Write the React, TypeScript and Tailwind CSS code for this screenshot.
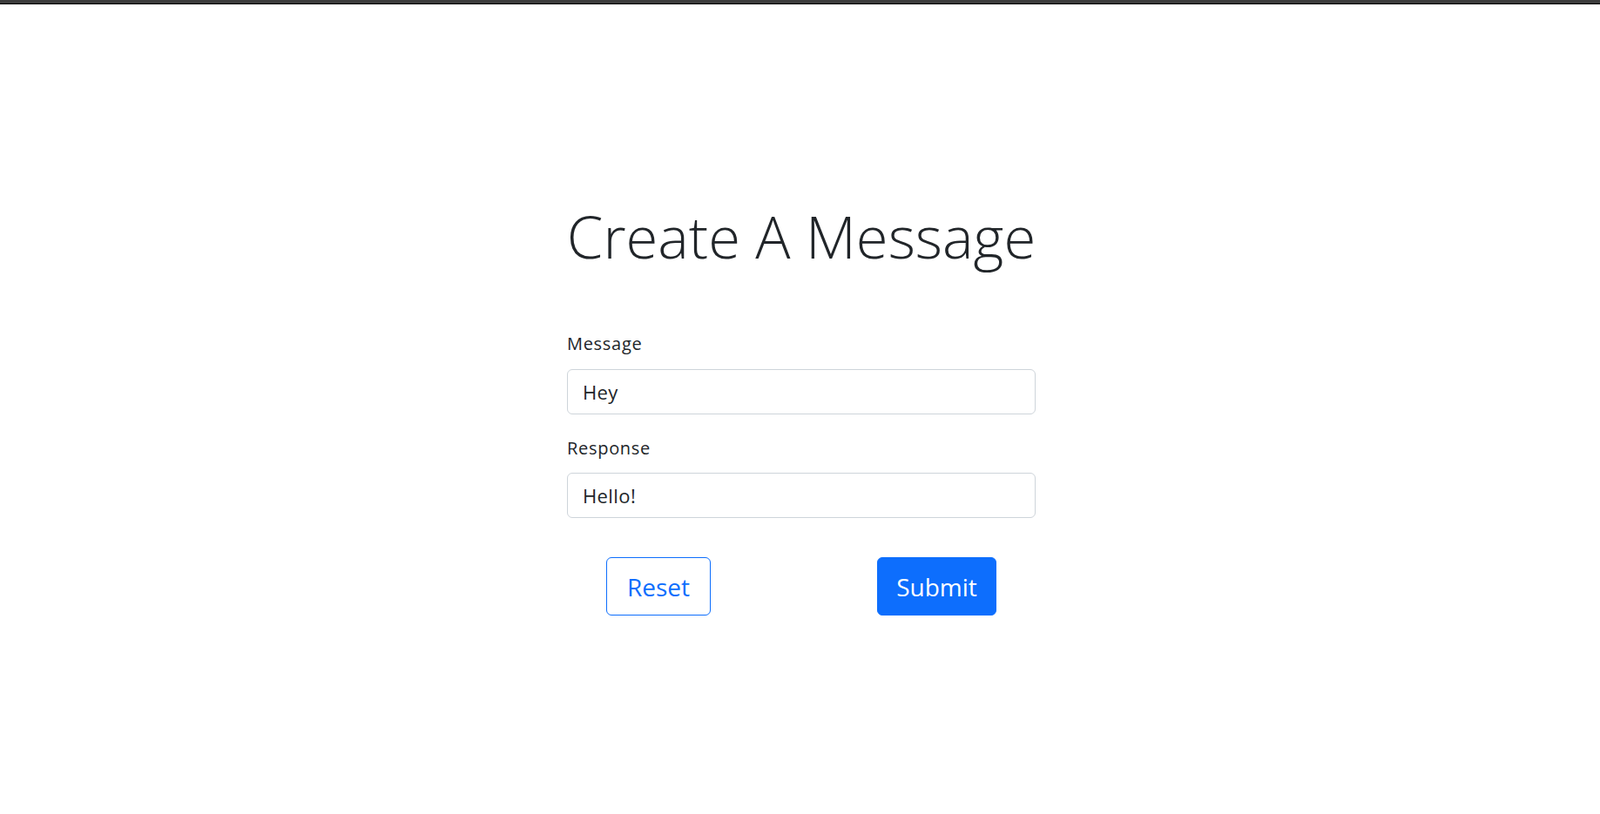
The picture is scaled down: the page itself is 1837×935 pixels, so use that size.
export default function App() {
  return (
    <div className="min-h-screen bg-white font-['Open_Sans',sans-serif] text-[#212529]">
      {/* window chrome line at the very top */}
      <div className="h-[4px] bg-[#3c3c3c] border-b border-black box-content" />

      <div className="flex justify-center pl-[3px] pt-[226px]">
        <div className="w-[538px]">
          <h1 className="-mx-[40px] text-center whitespace-nowrap text-[67px] leading-[1.2] font-light">
            Create A Message
          </h1>

          <form className="mt-[70px]" onSubmit={(e) => e.preventDefault()}>
            <label className="block text-[20px] leading-[28.5px] tracking-[0.7px] mb-[14px]">Message</label>
            <input
              defaultValue="Hey"
              className="block w-full h-[52px] px-[17px] text-[22px] tracking-[0.4px] border border-[#ced4da] rounded-[6px] outline-none text-[#212529]"
            />

            <label className="block text-[20px] leading-[28.5px] tracking-[0.7px] mt-[25px] mb-[14px]">
              Response
            </label>
            <input
              defaultValue="Hello!"
              className="block w-full h-[52px] px-[17px] text-[22px] tracking-[0.4px] border border-[#ced4da] rounded-[6px] outline-none text-[#212529]"
            />

            <div className="mt-[45px] px-[45px] flex justify-between">
              <button
                type="reset"
                className="w-[120px] h-[67px] text-[28px] text-[#0d6efd] border border-[#0d6efd] rounded-[6px] bg-white"
              >
                Reset
              </button>
              <button
                type="submit"
                className="w-[137px] h-[67px] text-[28px] text-white bg-[#0d6efd] border border-[#0d6efd] rounded-[6px]"
              >
                Submit
              </button>
            </div>
          </form>
        </div>
      </div>
    </div>
  );
}
